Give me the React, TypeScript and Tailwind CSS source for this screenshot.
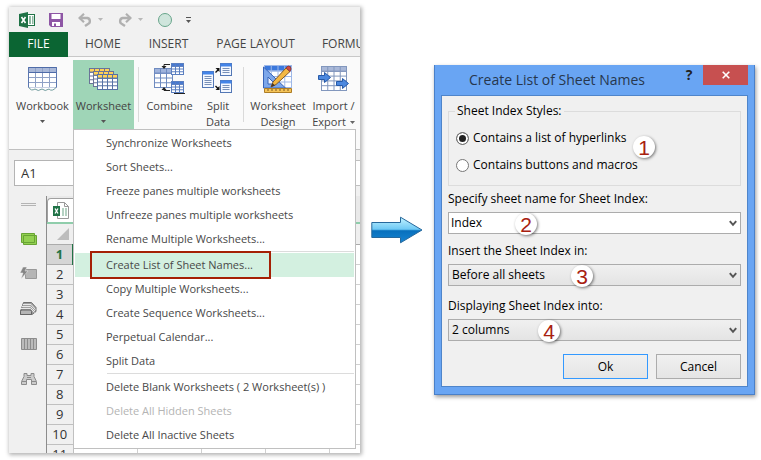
import type { ReactNode } from "react";

function ExcelIcon() {
  return (
    <svg width="16" height="16" viewBox="0 0 16 16">
      <rect x="8.500" y="2.500" width="7" height="11" fill="#fff" stroke="#1f7246" />
      <path d="M10 5h2M13 5h1.500M10 7h2M13 7h1.500M10 9h2M13 9h1.500M10 11h2M13 11h1.500" stroke="#1f7246" />
      <path d="M0 2l9-2v16l-9-2z" fill="#1f7246" />
      <path d="M2.500 5l4 6M6.500 5l-4 6" stroke="#fff" strokeWidth="1.600" />
    </svg>
  );
}

function SheetFileIcon() {
  return (
    <svg width="17" height="17" viewBox="0 0 17 17">
      <path d="M4.500 .5h7l4 4v12h-11z" fill="#fff" stroke="#999" />
      <path d="M11.500 .5v4h4" fill="none" stroke="#999" />
      <path d="M9 7h2M12 7h2M9 9h2M12 9h2M9 11h2M12 11h2M9 13h2M12 13h2" stroke="#6aa585" />
      <path d="M0 4h7v10H0z" fill="#1f7246" />
      <path d="M2 6.500l3 5M5 6.500l-3 5" stroke="#fff" strokeWidth="1.300" />
    </svg>
  );
}

function SaveIcon() {
  return (
    <svg width="14" height="14" viewBox="0 0 14 14">
      <path d="M0 0h14v14H2l-2-2z" fill="#8e56a5" />
      <path d="M2.500 1h9v5h-9zM3 9h8v4H3z" fill="#fff" />
      <path d="M5 10.500h2V13H5z" fill="#8e56a5" />
    </svg>
  );
}

function UndoIcon({ flip = false }: { flip?: boolean }) {
  return (
    <svg width="14" height="14" viewBox="0 0 14 14" className={flip ? "-scale-x-100" : ""}>
      <path d="M1.500 5H9.500a3.200 3.200 0 0 1 .5 6L7 13" fill="none" stroke="#b0b0b0" strokeWidth="2.400" />
      <path d="M6 .8L1.600 5 6 9.200" fill="none" stroke="#b0b0b0" strokeWidth="2.200" />
    </svg>
  );
}

function Caret({ color = "#b8b8b8" }: { color?: string }) {
  return (
    <svg width="5" height="3" viewBox="0 0 5 3" className="shrink-0">
      <path d="M0 0h5L2.500 3z" fill={color} />
    </svg>
  );
}

function MiniGrid({ x, y, w, h, head, line, rows = 4, cols = 4 }: { x: number; y: number; w: number; h: number; head: string; line: string; rows?: number; cols?: number }) {
  const v = Array.from({ length: cols - 1 }, (_, i) => x + ((i + 1) * w) / cols);
  const r = Array.from({ length: rows - 1 }, (_, i) => y + ((i + 1) * h) / rows);
  return (
    <g stroke={line}>
      <rect x={x} y={y} width={w} height={h} fill="#fff" />
      <rect x={x} y={y} width={w} height={h / rows} fill={head} />
      {v.map((p) => <path key={p} d={`M${p} ${y}v${h}`} />)}
      {r.map((p) => <path key={p} d={`M${x} ${p}h${w}`} />)}
    </g>
  );
}

function WorkbookIcon() {
  return (
    <svg width="32" height="32" viewBox="0 0 32 32">
      <MiniGrid x={1.500} y={5.500} w={28} h={20} head="#a9b8d8" line="#8fa1c6" />
      <path d="M2 25.500q2 4 6 1.500 3 3 7 0 3 3 7 0 3 3 7-1.500" fill="#fff" stroke="#6f9a9c" />
      <path d="M1.500 5.500h28v5h-28z" fill="none" stroke="#4e6ba8" />
      <path d="M1.500 5v20M29.500 5v20" stroke="#5b77b0" />
    </svg>
  );
}

function WorksheetIcon() {
  return (
    <svg width="32" height="32" viewBox="0 0 32 32">
      <MiniGrid x={1.500} y={6.500} w={20} h={15} head="#ffd257" line="#6a7398" />
      <MiniGrid x={5.500} y={9.500} w={20} h={15} head="#ffd257" line="#6a7398" />
      <MiniGrid x={9.500} y={12.500} w={20} h={15} head="#ffd257" line="#5672a5" />
    </svg>
  );
}

function CombineIcon() {
  return (
    <svg width="32" height="32" viewBox="0 0 32 32">
      <MiniGrid x={.5} y={6.500} w={18} h={19} head="#9fb3dc" line="#6f8bc0" cols={3} />
      <MiniGrid x={17.500} y={1.500} w={12} h={11} head="#4479d4" line="#5b7fc0" cols={3} />
      <MiniGrid x={17.500} y={19.500} w={12} h={11} head="#4479d4" line="#5b7fc0" cols={3} />
      <path d="M16 2.500H10V5M16 28.500H10V27" fill="none" stroke="#222" />
      <path d="M7.500 4h5L10 7zM7.500 28h5L10 25zM20 31h11v1H20z" fill="#222" />
    </svg>
  );
}

function Page({ x, y, h }: { x: number; y: number; h: number }) {
  const lines = Array.from({ length: Math.floor((h - 5) / 2) }, (_, i) => y + 5 + i * 2);
  return (
    <g>
      <rect x={x} y={y} width="11" height={h} fill="#f4f8ff" stroke="#5377b5" />
      <path d={`M${x} ${y + 1.500}h11`} stroke="#4384e8" strokeWidth="3" />
      {lines.map((p) => <path key={p} d={`M${x + 2} ${p}h7`} stroke="#7890b8" />)}
    </g>
  );
}

function SplitIcon() {
  return (
    <svg width="32" height="32" viewBox="0 0 32 32">
      <Page x={.5} y={9.500} h={16} />
      <Page x={18.500} y={1.500} h={12} />
      <Page x={18.500} y={18.500} h={12} />
      <path d="M13.500 10.500l3-3M13.500 24l3 3" stroke="#111" strokeWidth="1.400" />
      <path d="M17.500 6v4l-4-4zM17.500 28v-4l-4 4z" fill="#111" />
    </svg>
  );
}

function DesignIcon() {
  return (
    <svg width="32" height="32" viewBox="0 0 32 32">
      <MiniGrid x={2.500} y={3.500} w={27} h={22} head="#3b78dc" line="#9eb8e8" />
      <path d="M1.500 5v21h22z" fill="#7da7ea" stroke="#3864b8" />
      <path d="M6 15v7h7z" fill="#eef4ff" stroke="#3864b8" />
      <path d="M2.500 26.500h27v4h-27z" fill="#f5c458" stroke="#ad7d26" />
      <path d="M6 27v2M10 27v2M14 27v2M18 27v2M22 27v2M26 27v2" stroke="#7c5920" />
      <path d="M9 25l2-5L24 6l4 3.500-14 13z" fill="#f4b843" stroke="#80592a" />
      <path d="M24 6l2-2q3 0 3 3l-1 2.500z" fill="#cf4943" stroke="#963d39" />
      <path d="M9 25l1.500-4 2.500 2.500z" fill="#463528" />
    </svg>
  );
}

function ImportIcon() {
  return (
    <svg width="32" height="32" viewBox="0 0 32 32">
      <MiniGrid x={3.500} y={4.500} w={25} h={24} head="#a9b8d8" line="#8297bd" rows={5} />
      <path d="M.5 13.500h6v-3l6 5-6 5v-3h-6zM18.500 19.500h6v-3l6 5-6 5v-3h-6z" fill="#4b88df" stroke="#275aa8" />
    </svg>
  );
}

function Chevron() {
  return (
    <svg width="8" height="7" viewBox="0 0 8 7" className="pointer-events-none">
      <path d="M.8 1.200L4 4.800l3.200-3.600" fill="none" stroke="#555" strokeWidth="2" />
    </svg>
  );
}

function RibbonButton({ icon, lines, caret, width }: { icon: ReactNode; lines: string[]; caret?: "below" | "inline"; width: string }) {
  return (
    <button className={`flex h-[70px] shrink-0 flex-col items-center pt-0.5 text-[11px] leading-4 whitespace-nowrap ${width}`}>
      {icon}
      <span className="mt-1">{lines[0]}</span>
      {lines[1] && (
        <span className="flex items-center gap-1">
          {lines[1]}
          {caret === "inline" && <Caret color="#666" />}
        </span>
      )}
      {caret === "below" && <span className="mt-[6px]"><Caret color="#555" /></span>}
    </button>
  );
}

const menuGroups = [
  ["Synchronize Worksheets", "Sort Sheets...", "Freeze panes multiple worksheets", "Unfreeze panes multiple worksheets", "Rename Multiple Worksheets..."],
  ["Create List of Sheet Names...", "Copy Multiple Worksheets...", "Create Sequence Worksheets...", "Perpetual Calendar...", "Split Data"],
  ["Delete Blank Worksheets ( 2 Worksheet(s) )", "Delete All Hidden Sheets", "Delete All Inactive Sheets"],
];

function WorksheetMenu() {
  return (
    <div role="menu" className="absolute top-[69px] left-0 z-10 w-[283px] border border-[#c0c0c0] bg-white p-px text-[11px] text-[#484848]">
      {menuGroups.map((group, g) => (
        <div key={group[0]}>
          {g > 0 && <div className="ml-8 h-0.5 border-t border-[#dcdcdc]" />}
          {group.map((item) => {
            const active = item.startsWith("Create List");
            return (
              <button
                key={item}
                role="menuitem"
                disabled={item.includes("Hidden")}
                className={`relative block h-6 w-full pl-[31px] text-left leading-6 whitespace-nowrap disabled:text-[#b4b4b4] ${active ? "bg-[#d3f0e0]" : ""}`}
              >
                {item}
                {active && <span className="absolute -top-0.5 left-[15px] h-7 w-[181px] border-2 border-[#a52005]" />}
              </button>
            );
          })}
        </div>
      ))}
    </div>
  );
}

function SidePane() {
  return (
    <div className="flex w-[37px] shrink-0 flex-col items-center bg-[#f0f0f0] pt-0.5 pl-0.5">
      <div className="flex h-[33px] items-center"><div className="h-[3px] w-[15px] border-y border-[#b4b4b4]" /></div>
      <button className="flex h-[35px] items-center" aria-label="Workbook pane">
        <svg width="16" height="12" viewBox="0 0 16 12"><path d="M2.500 2.500h13v9h-13zM.5 .5h13v9H.5z" fill="#92d050" stroke="#68a334" /></svg>
      </button>
      <button className="flex h-[35px] items-center" aria-label="AutoText">
        <svg width="17" height="13" viewBox="0 0 17 13"><path d="M5.500 2.500h11v9h-11z" fill="#b5b5b5" stroke="#999" /><path d="M3 0h4L5 4h3L1 12l2-6H0z" fill="#858585" stroke="#f0f0f0" strokeWidth=".5" /></svg>
      </button>
      <button className="flex h-[35px] items-center" aria-label="Name manager">
        <svg width="17" height="13" viewBox="0 0 17 13">
          <path d="M3.500 .5h8l4.500 5v4l-4 3H.5v-3.500l1-2.500 1-3z" fill="#a0a0a0" stroke="#707070" />
          <path d="M3 2.500h8l4.500 5M2 4.500h8.500l4.500 4.500M1 6.500h9.500l4 4" fill="none" stroke="#e8e8e8" />
          <path d="M.5 9.500q0-1.500 1.500-1.500h8q1.500 0 1.500 1.500v3H.5z" fill="#b5b5b5" stroke="#666" />
        </svg>
      </button>
      <button className="flex h-[35px] items-center" aria-label="Column list">
        <svg width="16" height="12" viewBox="0 0 16 12"><path d="M.5 .5h15v11H.5z" fill="#bbb" stroke="#8c8c8c" /><path d="M3.500 0v12M6.500 0v12M9.500 0v12M12.500 0v12" stroke="#8c8c8c" /></svg>
      </button>
      <button className="flex h-[35px] items-center" aria-label="Find and replace">
        <svg width="16" height="12" viewBox="0 0 16 12"><path d="M3 .5h3v2h4v-2h3v3l2.500 5v3h-5v-5h-5v5h-5v-3L3 3.500z" fill="#ccc" stroke="#8c8c8c" /><path d="M1 8.500h4M11 8.500h4M6 4.500h4" stroke="#8c8c8c" /></svg>
      </button>
    </div>
  );
}

function Sheet() {
  const columns = ["A", "B", "C", "D", "E"];
  return (
    <div className="mt-2.5 flex h-[257px] min-w-0 flex-1 flex-col overflow-hidden border-l border-[#8c8c8c] bg-[#e9e9e9]">
      <div className="mt-0.5 flex h-[26px] shrink-0 border-b-2 border-[#8fcdab]">
        <div className="flex w-32 items-center rounded-tl border border-b-0 border-[#a0a0a0] bg-white pl-[5px]"><SheetFileIcon /></div>
      </div>
      <table className="w-full table-fixed border-collapse bg-white text-[13px] text-[#333]">
        <colgroup>
          <col className="w-[26px]" />
          {columns.map((c) => <col key={c} className="w-16" />)}
        </colgroup>
        <thead>
          <tr className="h-5 bg-[#efefef]">
            <th className="border-b border-[#ababab] p-0">
              <svg width="12" height="12" viewBox="0 0 12 12" className="ml-2.5"><path d="M12 0v12H0z" fill="#bdbdbd" /></svg>
            </th>
            {columns.map((c) => <th key={c} className="border-b border-[#ababab]" aria-label={`Column ${c}`} />)}
          </tr>
        </thead>
        <tbody>
          {Array.from({ length: 11 }, (_, i) => i + 1).map((n) => (
            <tr key={n} className="h-5">
              <th
                scope="row"
                className={`border-b p-0 text-center leading-[19px] ${n === 1 ? "border-r-2 border-[#ababab] border-r-[#217346] bg-[#d5d5d5] font-bold text-[#217346]" : "border-r border-[#c0c0c0] bg-[#f0f0f0] font-normal"}`}
              >
                {n}
              </th>
              {columns.map((c) => <td key={c} className="border-r border-b border-[#d0d0d0]" />)}
            </tr>
          ))}
        </tbody>
      </table>
    </div>
  );
}

function ExcelWindow() {
  return (
    <section className="min-w-0 flex-1 overflow-hidden bg-[#f1f1f1] text-[#444] shadow-[1px_1px_4px_1px_rgba(0,0,0,0.3)]">
      <div className="flex h-[25px] items-center pl-2.5">
        <ExcelIcon />
        <button className="ml-3.5" aria-label="Save"><SaveIcon /></button>
        <button className="ml-[15px] flex items-center gap-1.5" aria-label="Undo"><UndoIcon /><Caret /></button>
        <button className="ml-[15px] flex items-center gap-1.5" aria-label="Redo"><UndoIcon flip /><Caret /></button>
        <button className="ml-[15px] size-3.5 rounded-full border border-[#68a58b] bg-[#cfe5dc]" aria-label="Touch mode" />
        <button className="ml-3.5 flex flex-col items-center gap-0.5" aria-label="Customize toolbar">
          <span className="h-px w-[5px] bg-[#555]" />
          <Caret color="#555" />
        </button>
      </div>
      <nav className="flex h-[25px] items-center border-b border-[#c8c8c8] text-xs whitespace-nowrap">
        <button className="h-[25px] w-[59px] shrink-0 bg-[#0b6533] text-white">FILE</button>
        <button className="shrink-0 pl-[17px]">HOME</button>
        <button className="shrink-0 pl-7">INSERT</button>
        <button className="shrink-0 pl-7">PAGE LAYOUT</button>
        <button className="shrink-0 pl-[27px]">FORMU</button>
      </nav>
      <div className="flex h-[93px] border-b border-[#c0c0c0] bg-[#fafafa] pt-[3px] pl-[3px]">
        <RibbonButton icon={<WorkbookIcon />} lines={["Workbook"]} caret="below" width="w-[61px]" />
        <div className="relative bg-[#9fd5b7]">
          <RibbonButton icon={<WorksheetIcon />} lines={["Worksheet"]} caret="below" width="w-[61px]" />
          <WorksheetMenu />
        </div>
        <div className="mt-[7px] ml-1 h-[55px] w-px shrink-0 bg-[#dadada]" />
        <RibbonButton icon={<CombineIcon />} lines={["Combine"]} width="w-[61px]" />
        <RibbonButton icon={<SplitIcon />} lines={["Split", "Data"]} width="w-9" />
        <div className="mt-[7px] ml-[7px] h-[55px] w-px shrink-0 bg-[#dadada]" />
        <RibbonButton icon={<DesignIcon />} lines={["Worksheet", "Design"]} width="w-[68px]" />
        <RibbonButton icon={<ImportIcon />} lines={["Import /", "Export"]} caret="inline" width="w-[43px]" />
      </div>
      <div className="flex h-9 items-end gap-2 pl-[5px]">
        <input aria-label="Name box" defaultValue="A1" className="h-[26px] w-[110px] border border-[#b4b4b4] bg-white pl-1.5 text-[13px] text-[#333] outline-none" />
        <input aria-label="Formula bar" className="h-[26px] min-w-0 flex-1 border border-r-0 border-[#c0c0c0] bg-white outline-none" />
      </div>
      <div className="flex">
        <SidePane />
        <Sheet />
      </div>
    </section>
  );
}

function Arrow() {
  return (
    <svg width="52" height="28" viewBox="0 0 52 28" className="mx-[11px] shrink-0">
      <defs>
        <linearGradient id="arrowFill" x1="0" y1="0" x2="0" y2="1">
          <stop offset="0" stopColor="#c4f3ff" />
          <stop offset=".47" stopColor="#6ec9f5" />
          <stop offset=".53" stopColor="#0870bd" />
          <stop offset="1" stopColor="#1684d2" />
        </linearGradient>
      </defs>
      <path d="M.8 6.500h28.700V1.200L51 14 29.500 26.800v-5.300H.8z" fill="url(#arrowFill)" stroke="#26689c" />
    </svg>
  );
}

function Badge({ n, place }: { n: number; place: string }) {
  return (
    <span className={`absolute flex size-[22px] items-center justify-center rounded-full bg-white font-['Liberation_Sans',sans-serif] text-[21px] leading-none text-[#a82010] shadow-[1px_1px_3px_rgba(0,0,0,0.5)] ${place}`}>
      {n}
    </span>
  );
}

function Dropdown({ id, label, value }: { id: string; label: string; value: string }) {
  return (
    <>
      <label htmlFor={id} className="block h-[18px] leading-[18px]">{label}</label>
      <div className="mt-1 flex items-center">
        <select id={id} defaultValue={value} className="h-[22px] w-full appearance-none border border-[#acacac] bg-linear-to-b from-[#f0f0f0] to-[#e4e4e4] pl-[3px] outline-none">
          <option>{value}</option>
        </select>
        <span className="pointer-events-none -ml-3 shrink-0"><Chevron /></span>
      </div>
    </>
  );
}

function Dialog() {
  return (
    <section role="dialog" aria-labelledby="dialog-title" className="mr-1.5 w-[321px] shrink-0 border-x border-b border-[#4a80c8] bg-[#69a5f3] px-1.5 pb-[7px] text-xs text-black shadow-[1px_2px_4px_rgba(0,0,0,0.4)]">
      <header className="flex h-[30px] items-start">
        <h1 id="dialog-title" className="flex-1 pl-7 text-sm leading-[30px] whitespace-nowrap text-[#27374d]">Create List of Sheet Names</h1>
        <button aria-label="Help" className="mr-2.5 w-2 text-sm leading-5 font-bold text-[#222]">?</button>
        <button aria-label="Close" className="flex h-5 w-[45px] items-center justify-center bg-[#c75050]">
          <svg width="8" height="8" viewBox="0 0 8 8"><path d="M.7 .7l6.600 6.600M7.300 .7L.7 7.300" stroke="#fff" strokeWidth="1.600" /></svg>
        </button>
      </header>
      <form className="border border-[#4f85ca] bg-[#f0f0f0] px-1.5 py-[7px]" onSubmit={(e) => e.preventDefault()}>
        <fieldset className="relative border border-[#dcdcdc] pb-3 pl-[7px]">
          <legend className="-ml-px px-0.5 leading-4">Sheet Index Styles:</legend>
          <label className="mt-[11px] flex h-4 items-center gap-1">
            <input type="radio" name="style" defaultChecked className="size-[13px] appearance-none rounded-full border border-[#777] bg-white shadow-[inset_0_0_0_2px_white] checked:bg-[#222]" />
            Contains a list of hyperlinks
          </label>
          <label className="mt-[11px] flex h-4 items-center gap-1">
            <input type="radio" name="style" className="size-[13px] appearance-none rounded-full border border-[#777] bg-white" />
            Contains buttons and macros
          </label>
          <Badge n={1} place="top-[17px] left-[184px]" />
        </fieldset>
        <div className="relative mt-1">
          <label htmlFor="sheet-name" className="block h-[18px] leading-[18px]">Specify sheet name for Sheet Index:</label>
          <div className="mt-1 flex h-[22px] items-center border border-[#acacac] bg-white">
            <input id="sheet-name" defaultValue="Index" className="min-w-0 flex-1 pl-0.5 outline-none" />
            <button type="button" aria-label="Show names" className="mr-[3px]"><Chevron /></button>
          </div>
          <Badge n={2} place="top-[23px] left-[67px]" />
        </div>
        <div className="relative mt-2">
          <Dropdown id="insert-in" label="Insert the Sheet Index in:" value="Before all sheets" />
          <Badge n={3} place="top-[23px] left-[123px]" />
        </div>
        <div className="relative mt-[11px]">
          <Dropdown id="display-into" label="Displaying Sheet Index into:" value="2 columns" />
          <Badge n={4} place="top-[23px] left-[90px]" />
        </div>
        <div className="mt-[13px] flex justify-end gap-2">
          <button type="submit" className="h-[25px] w-[85px] border border-[#3399ff] bg-linear-to-b from-[#f0f0f0] to-[#e5e5e5]">Ok</button>
          <button type="button" className="h-[25px] w-[85px] border border-[#acacac] bg-linear-to-b from-[#f0f0f0] to-[#e5e5e5]">Cancel</button>
        </div>
      </form>
    </section>
  );
}

export default function App() {
  return (
    <main className="flex min-h-screen items-center bg-white pl-[9px] font-['Open_Sans',sans-serif]">
      <ExcelWindow />
      <Arrow />
      <Dialog />
    </main>
  );
}
